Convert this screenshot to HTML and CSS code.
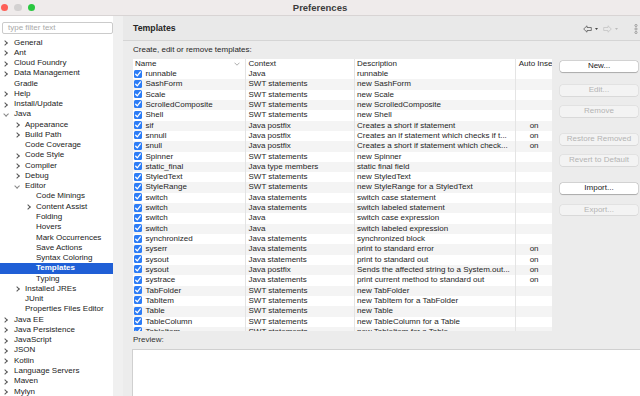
FILE: index.html
```html
<!DOCTYPE html>
<html>
<head>
<meta charset="utf-8">
<link rel="stylesheet" href="styles.css">
</head>
<body>
<div class="titlebar">
  <div class="lights"><span class="light red"></span><span class="light gray"></span><span class="light green"></span></div>
  <div class="title">Preferences</div>
  <div></div>
</div>
<div class="window">
  <aside class="sidebar">
    <div class="filter">type filter text</div>
    <ul class="tree">
      <li class="l1 c">General</li>
      <li class="l1 c">Ant</li>
      <li class="l1 c">Cloud Foundry</li>
      <li class="l1 c">Data Management</li>
      <li class="l1">Gradle</li>
      <li class="l1 c">Help</li>
      <li class="l1 c">Install/Update</li>
      <li class="l1 o">Java</li>
      <li class="l2 c">Appearance</li>
      <li class="l2 c">Build Path</li>
      <li class="l2">Code Coverage</li>
      <li class="l2 c">Code Style</li>
      <li class="l2 c">Compiler</li>
      <li class="l2 c">Debug</li>
      <li class="l2 o">Editor</li>
      <li class="l3">Code Minings</li>
      <li class="l3 c">Content Assist</li>
      <li class="l3">Folding</li>
      <li class="l3">Hovers</li>
      <li class="l3">Mark Occurrences</li>
      <li class="l3">Save Actions</li>
      <li class="l3">Syntax Coloring</li>
      <li class="l3 sel">Templates</li>
      <li class="l3">Typing</li>
      <li class="l2 c">Installed JREs</li>
      <li class="l2">JUnit</li>
      <li class="l2">Properties Files Editor</li>
      <li class="l1 c">Java EE</li>
      <li class="l1 c">Java Persistence</li>
      <li class="l1 c">JavaScript</li>
      <li class="l1 c">JSON</li>
      <li class="l1 c">Kotlin</li>
      <li class="l1 c">Language Servers</li>
      <li class="l1 c">Maven</li>
      <li class="l1 c">Mylyn</li>
    </ul>
  </aside>
  <div class="sash"></div>
  <main class="main">
    <header class="main-head">
      <span class="head-title">Templates</span>
      <span class="nav">
        <svg class="arrow" width="9" height="8" viewBox="0 0 9 8"><path d="M0.7 4 L4 0.8 L4 2.5 L8.3 2.5 L8.3 5.5 L4 5.5 L4 7.2 Z" fill="none" stroke="#5a5a5a" stroke-width="0.8" stroke-linejoin="round"/></svg>
        <svg class="drop" width="3" height="2" viewBox="0 0 3 2"><path d="M0 0 L3 0 L1.5 2 Z" fill="#444"/></svg>
        <svg class="arrow fwd" width="9" height="8" viewBox="0 0 9 8"><path d="M8.3 4 L5 0.8 L5 2.5 L0.7 2.5 L0.7 5.5 L5 5.5 L5 7.2 Z" fill="none" stroke="#c4c4c4" stroke-width="0.8" stroke-linejoin="round"/></svg>
        <svg class="drop" width="3" height="2" viewBox="0 0 3 2"><path d="M0 0 L3 0 L1.5 2 Z" fill="#bbb"/></svg>
        <svg class="dots" width="4" height="10" viewBox="0 0 4 10"><circle cx="2" cy="1.5" r="1.1" fill="none" stroke="#777" stroke-width="0.6"/><circle cx="2" cy="5" r="1.1" fill="none" stroke="#777" stroke-width="0.6"/><circle cx="2" cy="8.5" r="1.1" fill="none" stroke="#777" stroke-width="0.6"/></svg>
      </span>
    </header>
    <section class="content">
      <div class="desc">Create, edit or remove templates:</div>
      <div class="body-row">
        <div class="table-wrap">
          <table class="grid">
            <colgroup><col class="c-name"><col class="c-ctx"><col class="c-desc"><col class="c-auto"></colgroup>
            <thead>
              <tr><th class="name-h">Name<svg class="sort" width="6" height="4" viewBox="0 0 6 4"><path d="M0.5 0.7 L3 3.2 L5.5 0.7" fill="none" stroke="#8a8a8a" stroke-width="0.7"/></svg></th><th>Context</th><th>Description</th><th>Auto Insert</th></tr>
            </thead>
            <tbody>
              <tr><td><i class="cb"></i>runnable</td><td>Java</td><td>runnable</td><td></td></tr>
              <tr><td><i class="cb"></i>SashForm</td><td>SWT statements</td><td>new SashForm</td><td></td></tr>
              <tr><td><i class="cb"></i>Scale</td><td>SWT statements</td><td>new Scale</td><td></td></tr>
              <tr><td><i class="cb"></i>ScrolledComposite</td><td>SWT statements</td><td>new ScrolledComposite</td><td></td></tr>
              <tr><td><i class="cb"></i>Shell</td><td>SWT statements</td><td>new Shell</td><td></td></tr>
              <tr><td><i class="cb"></i>sif</td><td>Java postfix</td><td>Creates a short if statement</td><td>on</td></tr>
              <tr><td><i class="cb"></i>snnull</td><td>Java postfix</td><td>Creates an if statement which checks if t...</td><td>on</td></tr>
              <tr><td><i class="cb"></i>snull</td><td>Java postfix</td><td>Creates a short if statement which check...</td><td>on</td></tr>
              <tr><td><i class="cb"></i>Spinner</td><td>SWT statements</td><td>new Spinner</td><td></td></tr>
              <tr><td><i class="cb"></i>static_final</td><td>Java type members</td><td>static final field</td><td></td></tr>
              <tr><td><i class="cb"></i>StyledText</td><td>SWT statements</td><td>new StyledText</td><td></td></tr>
              <tr><td><i class="cb"></i>StyleRange</td><td>SWT statements</td><td>new StyleRange for a StyledText</td><td></td></tr>
              <tr><td><i class="cb"></i>switch</td><td>Java statements</td><td>switch case statement</td><td></td></tr>
              <tr><td><i class="cb"></i>switch</td><td>Java statements</td><td>switch labeled statement</td><td></td></tr>
              <tr><td><i class="cb"></i>switch</td><td>Java</td><td>switch case expression</td><td></td></tr>
              <tr><td><i class="cb"></i>switch</td><td>Java</td><td>switch labeled expression</td><td></td></tr>
              <tr><td><i class="cb"></i>synchronized</td><td>Java statements</td><td>synchronized block</td><td></td></tr>
              <tr><td><i class="cb"></i>syserr</td><td>Java statements</td><td>print to standard error</td><td>on</td></tr>
              <tr><td><i class="cb"></i>sysout</td><td>Java statements</td><td>print to standard out</td><td>on</td></tr>
              <tr><td><i class="cb"></i>sysout</td><td>Java postfix</td><td>Sends the affected string to a System.out...</td><td>on</td></tr>
              <tr><td><i class="cb"></i>systrace</td><td>Java statements</td><td>print current method to standard out</td><td>on</td></tr>
              <tr><td><i class="cb"></i>TabFolder</td><td>SWT statements</td><td>new TabFolder</td><td></td></tr>
              <tr><td><i class="cb"></i>TabItem</td><td>SWT statements</td><td>new TabItem for a TabFolder</td><td></td></tr>
              <tr><td><i class="cb"></i>Table</td><td>SWT statements</td><td>new Table</td><td></td></tr>
              <tr><td><i class="cb"></i>TableColumn</td><td>SWT statements</td><td>new TableColumn for a Table</td><td></td></tr>
              <tr><td><i class="cb"></i>TableItem</td><td>SWT statements</td><td>new TableItem for a Table</td><td></td></tr>
            </tbody>
          </table>
        </div>
        <div class="buttons">
          <button class="btn b-new">New...</button>
          <button class="btn off b-edit">Edit...</button>
          <button class="btn off b-s">Remove</button>
          <button class="btn off b-l">Restore Removed</button>
          <button class="btn off b-s">Revert to Default</button>
          <button class="btn b-l">Import...</button>
          <button class="btn off b-x">Export...</button>
        </div>
      </div>
      <div class="preview-label">Preview:</div>
      <div class="preview"></div>
    </section>
  </main>
</div>
</body>
</html>
```
FILE: styles.css
```css
* { box-sizing: border-box; }
html, body { margin: 0; padding: 0; }
body {
  width: 640px; height: 396px; overflow: hidden;
  font-family: "Liberation Sans", Arial, sans-serif;
  font-size: 8px; color: #222;
  background: #ececec;
}
.titlebar {
  height: 16px;
  background: #efebeb;
  border-bottom: 1px solid #d8d4d4;
  display: grid;
  grid-template-columns: 1fr auto 1fr;
  align-items: center;
}
.lights { display: flex; gap: 6px; padding-left: 0.5px; }
.light { width: 7.5px; height: 7.5px; border-radius: 50%; display: block; }
.red { background: #fe5f57; }
.gray { background: #d3d1d1; }
.green { background: #2ac740; }
.title { font-weight: bold; font-size: 9.5px; color: #3b3b3b; }

.window { display: flex; height: 380px; overflow: hidden; }
.sidebar { width: 113px; background: #fff; display: flex; flex-direction: column; flex: none; }
.sash { width: 10px; background: #f0f0f0; flex: none; }
.filter {
  margin: 6px 0 0 2px; width: 111px; height: 12px; flex: none;
  border: 1px solid #cbcbcb; border-radius: 2px;
  padding-left: 5px; line-height: 10px; color: #a9a9a9;
}
.tree { list-style: none; margin: 3.5px 0 0 0; padding: 0; flex: none; }
.tree li {
  height: 10.27px; line-height: 10.27px; white-space: nowrap;
  position: relative; color: #222;
}
.tree .l1 { padding-left: 14px; }
.tree .l2 { padding-left: 25px; }
.tree .l3 { padding-left: 36px; }
.tree li.c::before {
  content: ""; position: absolute; top: 3.5px;
  width: 3px; height: 3px;
  border-right: 0.8px solid #555; border-top: 0.8px solid #555;
  transform: rotate(45deg);
}
.tree li.o::before {
  content: ""; position: absolute; top: 2.6px;
  width: 3.2px; height: 3.2px;
  border-right: 0.8px solid #888; border-bottom: 0.8px solid #888;
  transform: rotate(45deg);
}
.tree .l1.c::before { left: 3px; }
.tree .l2.c::before { left: 14.5px; }
.tree .l3.c::before { left: 25.5px; }
.tree .l1.o::before { left: 4px; }
.tree .l2.o::before { left: 15px; }
.tree .sel { background: #1f5fd6; color: #fff; font-weight: bold; }

.main { flex: 1; display: flex; flex-direction: column; min-width: 0; overflow: hidden; }
.main-head {
  flex: none;
  height: 25px; background: #e9e9e9; border-bottom: 1px solid #d5d5d5;
  display: flex; align-items: center; justify-content: space-between;
  padding: 0 2px 0 10px;
}
.head-title { font-weight: bold; font-size: 8.75px; color: #262626; padding-bottom: 1px; }
.nav { display: flex; align-items: center; gap: 3px; padding-top: 2px; }
.nav .drop { margin-right: 2px; }
.nav .dots { margin-left: 11px; }

.content { padding-left: 10px; flex: none; }
.desc { margin-top: 3.5px; height: 9px; line-height: 9px; color: #262626; }
.body-row { display: flex; gap: 8px; margin-top: 5.2px; }
.table-wrap {
  width: 419px; height: 272.3px; overflow: hidden; background: #fff;
  flex: none;
}
.grid { border-collapse: collapse; table-layout: fixed; width: 419px; }
.c-name { width: 112.5px; }
.c-ctx { width: 108.5px; }
.c-desc { width: 161.7px; }
.c-auto { width: 36.3px; }
.grid th, .grid td {
  height: 10.32px; line-height: 10.32px; padding: 0 0 0 2.5px;
  white-space: nowrap; overflow: hidden; text-overflow: clip;
  border-left: 1px solid #e4e4e4; font-weight: normal; text-align: left;
  color: #1e1e1e;
}
.grid th:first-child, .grid td:first-child { border-left: none; }
.grid th { background: #fff; }
.grid .name-h { padding-left: 2px; position: relative; }
.sort { position: absolute; right: 5px; top: 3.5px; }
.grid td:first-child { padding-left: 1px; }
.grid td:last-child { text-align: center; padding-left: 0; }
.grid tbody tr:nth-child(even) td { background: #f4f4f4; }
.cb {
  display: inline-block; width: 8px; height: 8px; vertical-align: -1.5px;
  margin-right: 3.5px; border-radius: 1.5px; background: #2c7cf6;
  background-image: url("data:image/svg+xml;utf8,<svg xmlns='http://www.w3.org/2000/svg' viewBox='0 0 8 8'><path d='M1.7 4.2 L3.3 5.9 L6.4 1.9' fill='none' stroke='white' stroke-width='1.3' stroke-linecap='round' stroke-linejoin='round'/></svg>");
}

.buttons { display: flex; flex-direction: column; width: 78px; flex: none; }
.btn {
  font: inherit; height: 10.6px; line-height: 10px; padding: 0; flex: none;
  border: none; border-radius: 2.5px; background: #fff; color: #222;
  box-shadow: 0 0 0 0.5px rgba(0,0,0,0.18), 0 0.5px 1px rgba(0,0,0,0.2);
}
.btn.off { background: #f3f3f3; color: #b3b3b3; box-shadow: 0 0 0 0.5px rgba(0,0,0,0.08), 0 0.5px 0.5px rgba(0,0,0,0.08); }
.b-new { margin-top: 2.3px; }
.b-edit { margin-top: 13.4px; }
.b-s { margin-top: 10.4px; }
.b-l { margin-top: 17.4px; }
.b-x { margin-top: 11px; }

.preview-label { margin-top: 4.5px; height: 9px; line-height: 9px; color: #333; }
.preview {
  margin-top: 4.2px; margin-left: -1px; width: 530px; height: 60px;
  background: #fff; border: 1px solid #d0d0d0;
}
```
